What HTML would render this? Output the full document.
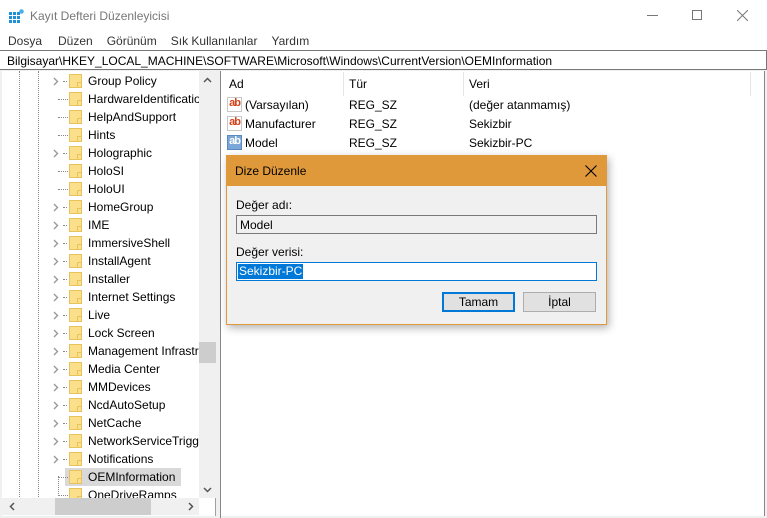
<!DOCTYPE html>
<html><head><meta charset="utf-8"><style>
*{margin:0;padding:0;box-sizing:border-box}
body{width:767px;height:518px;background:#fff;font-family:"Liberation Sans",sans-serif;font-size:12px;color:#000;position:relative;overflow:hidden}
.abs{position:absolute}
.t{white-space:nowrap}
.row{position:absolute;left:0;height:18px;width:199px}
.fold{position:absolute;left:67px;top:2px;width:13px;height:14px;background:#fcdf8a;border:1px solid #e8c25a}
.fold:after{content:"";position:absolute;right:-1px;bottom:-1px;width:4px;height:5px;border-left:1px solid #e8c25a;border-top:1px solid #e8c25a}
.lbl{position:absolute;left:86px;top:2px;font-size:12px;white-space:nowrap}
.chev{position:absolute;left:51px;top:5px}
.dot{position:absolute;left:61px;top:9px;width:4px;border-top:1px dotted #888}
.hdot{position:absolute;left:56px;top:9px;width:10px;border-top:1px dotted #888}
.ab{position:absolute;width:15px;height:15px;border:1px solid #c8c8c8;background:#fff;font-size:11px;font-weight:bold;color:#d2421c;line-height:11px;text-align:center;letter-spacing:-1px}
</style></head><body>
<div class="abs" style="left:9px;top:9px;width:14px;height:14px">
<svg width="16" height="16"><g fill="#1e90d8"><rect x="0" y="3" width="3" height="3"/><rect x="4" y="3" width="3" height="3"/><rect x="8" y="3" width="3" height="3"/><rect x="0" y="7" width="3" height="3"/><rect x="4" y="7" width="3" height="3"/><rect x="8" y="7" width="3" height="3"/><rect x="0" y="11" width="3" height="3"/><rect x="4" y="11" width="3" height="3"/><rect x="8" y="11" width="3" height="3"/></g><circle cx="12.5" cy="2.5" r="2.3" fill="#48b0e8"/></svg></div>
<div class="abs t" style="left:30px;top:9px;font-size:12px;color:#777">Kayıt Defteri Düzenleyicisi</div>
<div class="abs" style="left:647px;top:15px;width:11px;border-top:1px solid #777"></div>
<div class="abs" style="left:692px;top:10px;width:10px;height:10px;border:1px solid #777"></div>
<svg class="abs" style="left:737px;top:10px" width="11" height="11"><path d="M0 0L11 11M11 0L0 11" stroke="#777" stroke-width="1"/></svg>
<div class="abs t" style="left:8px;top:34px;font-size:12px;color:#333">Dosya<span style="margin-left:16px">Düzen</span><span style="margin-left:14px">Görünüm</span><span style="margin-left:14px">Sık Kullanılanlar</span><span style="margin-left:14px">Yardım</span></div>
<div class="abs" style="left:0;top:50px;width:767px;height:20px;border-top:1px solid #777;border-bottom:1px solid #777;border-right:1px solid #777;background:#fff"></div>
<div class="abs t" style="left:7px;top:54px">Bilgisayar\HKEY_LOCAL_MACHINE\SOFTWARE\Microsoft\Windows\CurrentVersion\OEMInformation</div>
<div class="abs" style="left:0;top:70px;width:767px;height:448px;background:#f0f0f0"></div>
<div class="abs" style="left:2px;top:71px;width:214px;height:445px;background:#fff;border-right:1px solid #a0a0a0;overflow:hidden">
<div class="abs" style="left:17px;top:0;height:430px;border-left:1px dotted #888"></div>
<div class="abs" style="left:36px;top:0;height:430px;border-left:1px dotted #888"></div>
<div class="abs" style="left:56px;top:405px;height:18px;border-left:1px dotted #888"></div>
</div>
<div id="tree" class="abs" style="left:2px;top:72px;width:197px;height:426px;overflow:hidden"></div>
<div class="abs" style="left:199px;top:71px;width:17px;height:427px;background:#f0f0f0"></div>
<div class="abs" style="left:199px;top:342px;width:17px;height:21px;background:#cdcdcd"></div>
<svg class="abs" style="left:203px;top:77px" width="9" height="6"><path d="M1 5L4.5 1.5L8 5" stroke="#555" stroke-width="1.5" fill="none"/></svg>
<svg class="abs" style="left:203px;top:487px" width="9" height="6"><path d="M1 1L4.5 4.5L8 1" stroke="#555" stroke-width="1.5" fill="none"/></svg>
<div class="abs" style="left:2px;top:498px;width:197px;height:17px;background:#f0f0f0"></div>
<div class="abs" style="left:55px;top:498px;width:96px;height:17px;background:#cdcdcd"></div>
<svg class="abs" style="left:9px;top:502px" width="6" height="9"><path d="M5 1L1.5 4.5L5 8" stroke="#555" stroke-width="1.5" fill="none"/></svg>
<svg class="abs" style="left:188px;top:502px" width="6" height="9"><path d="M1 1L4.5 4.5L1 8" stroke="#555" stroke-width="1.5" fill="none"/></svg>
<div class="abs" style="left:220px;top:71px;width:1px;height:447px;background:#888"></div>
<div class="abs" style="left:221px;top:71px;width:544px;height:445px;background:#fff;border-right:1px solid #888"></div>
<div class="abs" style="left:343px;top:72px;height:24px;border-left:1px solid #e5e5e5"></div>
<div class="abs" style="left:463px;top:72px;height:24px;border-left:1px solid #e5e5e5"></div>
<div class="abs" style="left:750px;top:72px;height:24px;border-left:1px solid #e5e5e5"></div>
<div class="abs t" style="left:229px;top:77px">Ad</div>
<div class="abs t" style="left:349px;top:77px">Tür</div>
<div class="abs t" style="left:469px;top:77px">Veri</div>
<div class="ab" style="left:227px;top:97px">ab</div>
<div class="abs t" style="left:245px;top:98px">(Varsayılan)</div><div class="abs t" style="left:349px;top:98px">REG_SZ</div><div class="abs t" style="left:469px;top:98px">(değer atanmamış)</div>
<div class="ab" style="left:227px;top:116px">ab</div>
<div class="abs t" style="left:245px;top:117px">Manufacturer</div><div class="abs t" style="left:349px;top:117px">REG_SZ</div><div class="abs t" style="left:469px;top:117px">Sekizbir</div>
<div class="ab" style="left:227px;top:135px;background:#7aa7d8;color:#fff;border-color:#5b8ac0">ab</div>
<div class="abs t" style="left:245px;top:136px">Model</div><div class="abs t" style="left:349px;top:136px">REG_SZ</div><div class="abs t" style="left:469px;top:136px">Sekizbir-PC</div>
<div class="abs" style="left:226px;top:155px;width:381px;height:170px;background:#f0f0f0;border:1px solid #e0993a;box-shadow:2px 3px 8px rgba(0,0,0,.3)">
<div class="abs" style="left:0;top:0;width:379px;height:30px;background:#e0993a"></div>
<div class="abs t" style="left:8px;top:8px;font-size:12px">Dize Düzenle</div>
<svg class="abs" style="left:358px;top:9px" width="12" height="12"><path d="M0.5 0.5L11.5 11.5M11.5 0.5L0.5 11.5" stroke="#000" stroke-width="1.1"/></svg>
<div class="abs t" style="left:9px;top:42px">Değer adı:</div>
<div class="abs" style="left:9px;top:59px;width:361px;height:19px;border:1px solid #7a7a7a;background:#f0f0f0"></div>
<div class="abs t" style="left:13px;top:62px">Model</div>
<div class="abs t" style="left:9px;top:89px">Değer verisi:</div>
<div class="abs" style="left:9px;top:106px;width:361px;height:19px;border:1px solid #0078d7;background:#fff"></div>
<div class="abs t" style="left:11px;top:108px;background:#0078d7;color:#fff;padding:1px 1px;line-height:13px">Sekizbir-PC</div>
<div class="abs" style="left:215px;top:136px;width:73px;height:20px;border:2px solid #0078d7;background:#e1e1e1;text-align:center;line-height:16px">Tamam</div>
<div class="abs" style="left:296px;top:136px;width:73px;height:20px;border:1px solid #adadad;background:#e1e1e1;text-align:center;line-height:18px">İptal</div>
</div>
<script>
var items=[["Group Policy",1],["HardwareIdentification",0],["HelpAndSupport",0],["Hints",0],["Holographic",1],["HoloSI",0],["HoloUI",0],["HomeGroup",1],["IME",1],["ImmersiveShell",1],["InstallAgent",1],["Installer",1],["Internet Settings",1],["Live",1],["Lock Screen",1],["Management Infrastructure",1],["Media Center",1],["MMDevices",1],["NcdAutoSetup",1],["NetCache",1],["NetworkServiceTriggers",1],["Notifications",1],["OEMInformation",2],["OneDriveRamps",0]];
var h="";items.forEach(function(it,i){var y=i*18;h+='<div class="row" style="top:'+y+'px">'+(it[1]==2?'<div style="position:absolute;left:63px;top:0;width:116px;height:18px;background:#d9d9d9"></div>':'')+(it[1]==1?'<svg class="chev" width="6" height="9"><path d="M1 1L4.5 4.5L1 8" stroke="#999" stroke-width="1.4" fill="none"/></svg><div class="dot"></div>':'<div class="hdot"></div>')+'<div class="fold"></div><div class="lbl">'+it[0]+'</div></div>';});
document.getElementById("tree").innerHTML=h;
</script>
</body></html>
